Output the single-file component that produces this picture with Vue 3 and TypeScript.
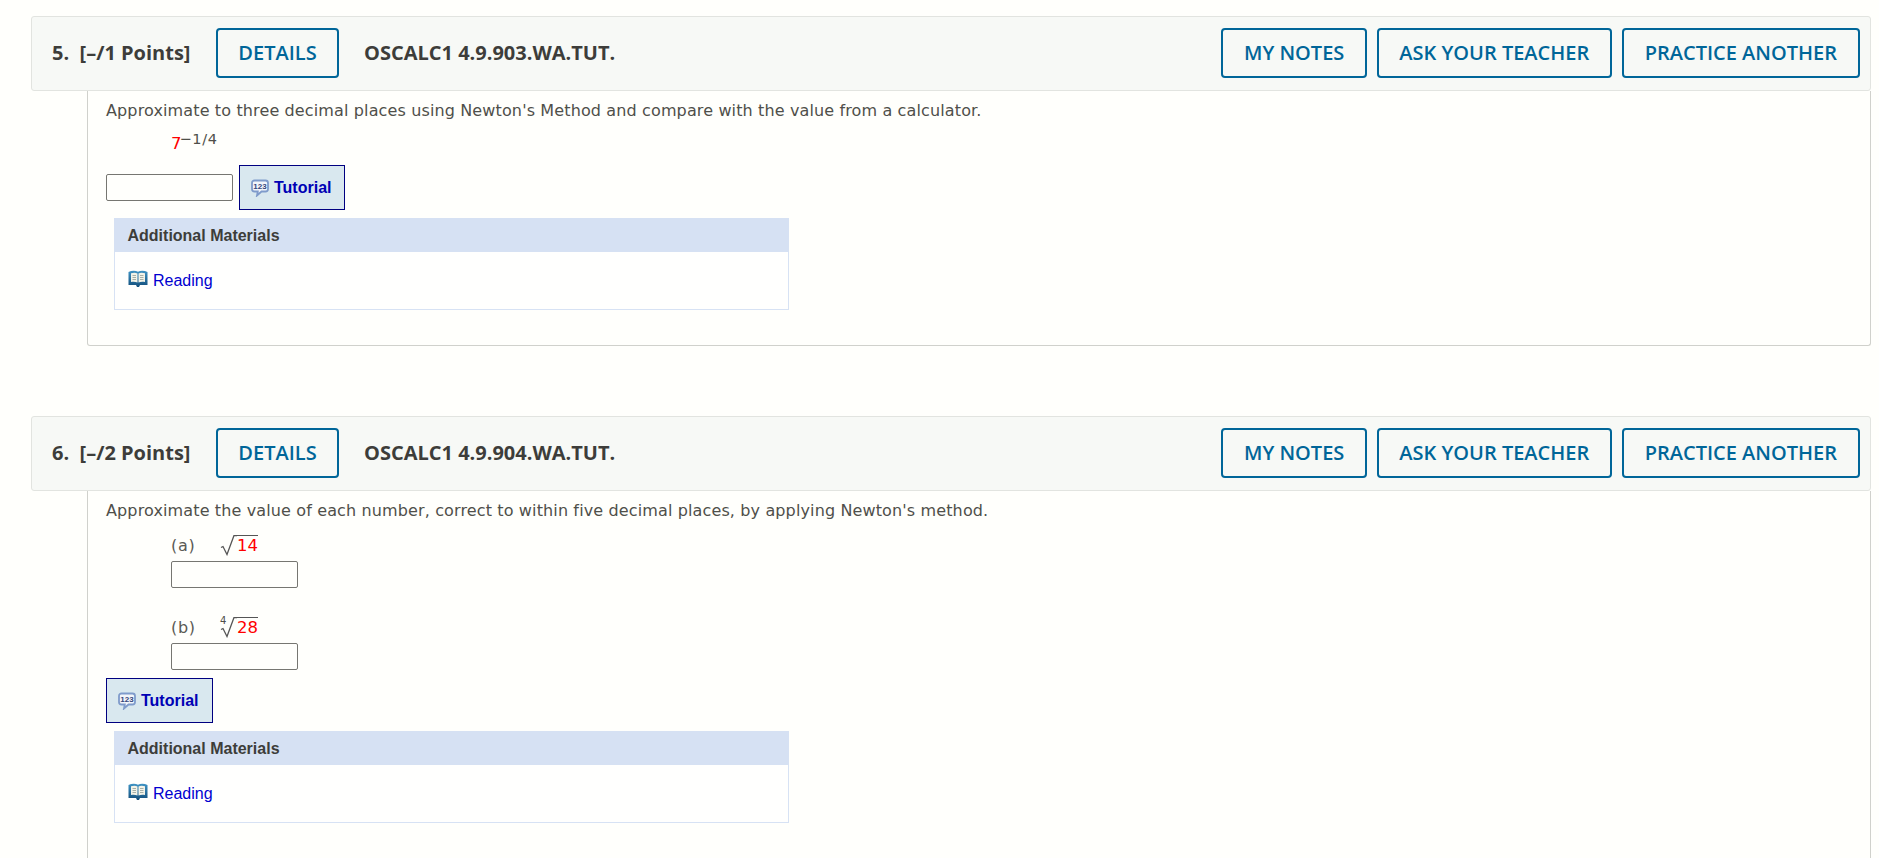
<script setup lang="ts">
const rightButtons: string[] = ['MY NOTES', 'ASK YOUR TEACHER', 'PRACTICE ANOTHER']
</script>

<template>
  <div class="page">
    <section class="question q5">
      <header class="bar">
        <span class="num">5.&nbsp; [–/1 Points]</span>
        <button class="btn details">DETAILS</button>
        <span class="code">OSCALC1 4.9.903.WA.TUT.</span>
        <span class="spacer"></span>
        <button v-for="b in rightButtons" :key="b" class="btn">{{ b }}</button>
      </header>
      <div class="body">
        <p class="prompt">Approximate to three decimal places using Newton's Method and compare with the value from a calculator.</p>
        <div class="expr"><span class="red">7</span><sup>−1/4</sup></div>
        <div class="answer-row">
          <input class="field" type="text" />
          <a class="tutorial">
            <svg class="bubble" width="18" height="18" viewBox="0 0 18 18">
              <path d="M3.500 1.500h11A2.500 2.500 0 0 1 17 4v6a2.500 2.500 0 0 1-2.500 2.500H10.500l-4.500 4 .8-4H3.500A2.500 2.500 0 0 1 1 10V4a2.500 2.500 0 0 1 2.500-2.500z" fill="#f2f5fa" stroke="#7f9bcb" stroke-width="1.800" />
              <text x="9" y="10" text-anchor="middle" class="bubble-text">123</text>
            </svg>
            Tutorial
          </a>
        </div>
        <div class="materials">
          <div class="mat-head">Additional Materials</div>
          <div class="mat-body">
            <svg class="book" width="20" height="18" viewBox="0 0 20 18">
              <defs>
                <linearGradient id="cover" x1="0" y1="0" x2="0" y2="1">
                  <stop offset="0" stop-color="#3f93c4" />
                  <stop offset="1" stop-color="#134f7c" />
                </linearGradient>
              </defs>
              <path d="M0.500 2c3-1.500 7-1.500 9.500-.3 2.500-1.200 6.500-1.200 9.500 .3v13h-7.500l-1 2H9l-1-2H0.500z" fill="url(#cover)" />
              <path d="M3 3.300c2.500-.8 5-.7 6.500 .2v9c-2-.8-4.500-.9-6.500-.4zM17 3.300c-2.500-.8-5-.7-6.500 .2v9c2-.8 4.500-.9 6.500-.4z" fill="#f3f3e8" />
              <path d="M4.500 5.500h3.500M4.500 7.500h3.500M4.500 9.500h3.500M12 5.500h3.500M12 7.500h3.500M12 9.500h3.500" stroke="#a7b0a8" stroke-width="1" />
            </svg>
            <a class="link">Reading</a>
          </div>
        </div>
      </div>
    </section>

    <section class="question q6">
      <header class="bar">
        <span class="num">6.&nbsp; [–/2 Points]</span>
        <button class="btn details">DETAILS</button>
        <span class="code">OSCALC1 4.9.904.WA.TUT.</span>
        <span class="spacer"></span>
        <button v-for="b in rightButtons" :key="b" class="btn">{{ b }}</button>
      </header>
      <div class="body">
        <p class="prompt">Approximate the value of each number, correct to within five decimal places, by applying Newton's method.</p>
        <div class="part">
          <div class="part-line">
            <span class="label">(a)</span>
            <span class="radical">
              <svg width="17" height="21" viewBox="0 0 17 21"><path d="M1 12.500l2-1 4 8L14 .5H17" fill="none" stroke="#555" stroke-width="1.300" /></svg>
              <span class="radicand">14</span>
            </span>
          </div>
          <input class="field" type="text" />
        </div>
        <div class="part part-b">
          <div class="part-line">
            <span class="label">(b)</span>
            <span class="radical">
              <span class="index">4</span>
              <svg width="17" height="21" viewBox="0 0 17 21"><path d="M1 12.500l2-1 4 8L14 .5H17" fill="none" stroke="#555" stroke-width="1.300" /></svg>
              <span class="radicand">28</span>
            </span>
          </div>
          <input class="field" type="text" />
        </div>
        <a class="tutorial solo">
          <svg class="bubble" width="18" height="18" viewBox="0 0 18 18">
            <path d="M3.500 1.500h11A2.500 2.500 0 0 1 17 4v6a2.500 2.500 0 0 1-2.500 2.500H10.500l-4.500 4 .8-4H3.500A2.500 2.500 0 0 1 1 10V4a2.500 2.500 0 0 1 2.500-2.500z" fill="#f2f5fa" stroke="#7f9bcb" stroke-width="1.800" />
            <text x="9" y="10" text-anchor="middle" class="bubble-text">123</text>
          </svg>
          Tutorial
        </a>
        <div class="materials">
          <div class="mat-head">Additional Materials</div>
          <div class="mat-body">
            <svg class="book" width="20" height="18" viewBox="0 0 20 18">
              <path d="M0.500 2c3-1.500 7-1.500 9.500-.3 2.500-1.200 6.500-1.200 9.500 .3v13h-7.500l-1 2H9l-1-2H0.500z" fill="url(#cover)" />
              <path d="M3 3.300c2.500-.8 5-.7 6.500 .2v9c-2-.8-4.500-.9-6.500-.4zM17 3.300c-2.500-.8-5-.7-6.500 .2v9c2-.8 4.500-.9 6.500-.4z" fill="#f3f3e8" />
              <path d="M4.500 5.500h3.500M4.500 7.500h3.500M4.500 9.500h3.500M12 5.500h3.500M12 7.500h3.500M12 9.500h3.500" stroke="#a7b0a8" stroke-width="1" />
            </svg>
            <a class="link">Reading</a>
          </div>
        </div>
      </div>
    </section>
  </div>
</template>

<style>
html, body { background: #fffffc; overflow: hidden; }
</style>

<style scoped>
.page {
  height: 858px;
  overflow: hidden;
  box-sizing: border-box;
  padding: 16px 8px 0 31px;
  background: #fffffc;
  font-family: "DejaVu Sans", Verdana, sans-serif;
  color: #4f4f4a;
}
.question { margin-bottom: 70px; }
.bar {
  display: flex;
  align-items: center;
  height: 75px;
  box-sizing: border-box;
  padding: 0 10px 2px 20px;
  background: #f7f9f6;
  border: 1px solid #e2e4e0;
  border-radius: 3px;
  font-family: "Open Sans", sans-serif;
  color: #3d3d3a;
  font-size: 20px;
  font-weight: 700;
}
.num { width: 164px; white-space: nowrap; }
.code { margin-left: 25px; white-space: nowrap; }
.spacer { flex: 1; }
.btn {
  height: 50px;
  box-sizing: border-box;
  padding: 0 20.500px;
  margin-left: 10px;
  background: transparent;
  border: 2px solid #006699;
  border-radius: 4px;
  color: #006699;
  font-family: "Open Sans", sans-serif;
  font-size: 20px;
  font-weight: 600;
  white-space: nowrap;
}
.btn:last-child { padding: 0 21px; }
.details { margin-left: 0; width: 123px; padding: 0; }
.body {
  margin-left: 56px;
  height: 255px;
  box-sizing: border-box;
  padding: 9px 0 0 18px;
  border: 1px solid #d0d1cc;
  border-top: 0;
  border-radius: 0 0 3px 3px;
  font-size: 16px;
}
.q6 .body { height: 400px; }
.prompt { margin: 0; line-height: 21px; white-space: nowrap; letter-spacing: .13px; }
.expr { margin: 11px 0 0 65px; line-height: 24px; height: 24px; font-size: 16.500px; }
.expr sup { font-size: 14.500px; line-height: 0; vertical-align: 5px; letter-spacing: .7px; margin-left: -2px; }
.red { color: #f00; }
.answer-row { display: flex; align-items: center; gap: 6px; margin-top: 9px; }
.answer-row .tutorial { width: 106px; }
.field {
  display: block;
  width: 127px;
  height: 27px;
  box-sizing: border-box;
  margin: 0;
  padding: 0;
  background: #fffffc;
  border: 1px solid #767671;
  border-radius: 2px;
}
.tutorial {
  display: flex;
  align-items: center;
  gap: 5px;
  width: 107px;
  height: 45px;
  box-sizing: border-box;
  padding-left: 11px;
  background: #d9e8ef;
  border: 1px solid #000080;
  font-family: "Liberation Sans", Arial, sans-serif;
  font-size: 16px;
  font-weight: 700;
  color: #0000b5;
}
.bubble { flex: none; margin-top: 1px; }
.bubble-text { font-family: "Liberation Sans", sans-serif; font-size: 8px; font-weight: 700; fill: #36467c; }
.materials {
  width: 675px;
  box-sizing: border-box;
  margin: 8px 0 0 8px;
  border: 1px solid #d7e2f4;
  border-top: 0;
  font-family: "Liberation Sans", Arial, sans-serif;
}
.mat-head {
  height: 34px;
  line-height: 36px;
  margin: 0 -1px;
  padding-left: 13.500px;
  background: #d6e1f3;
  color: #3d3d3a;
  font-size: 16px;
  font-weight: 700;
}
.mat-body {
  display: flex;
  align-items: center;
  gap: 5px;
  height: 57px;
  padding-left: 13px;
  background: #fffffe;
}
.book { flex: none; margin-top: -3px; }
.link { color: #0000d0; font-size: 16px; }
.part { margin-left: 65px; margin-top: 11px; }
.part-b { margin-top: 26px; }
.part-line { display: flex; align-items: center; height: 29px; gap: 25px; }
.label { width: 24px; font-size: 16px; letter-spacing: .7px; color: #5a5a55; margin-top: -2px; }
.radical { display: inline-flex; align-items: flex-start; position: relative; margin-top: -2px; }
.radicand { border-top: 1px solid #555; color: #f00; font-size: 16.500px; line-height: 20px; }
.index { position: absolute; left: 0; top: -1px; font-size: 10px; line-height: 10px; }
.solo { margin-top: 8px; }
</style>
